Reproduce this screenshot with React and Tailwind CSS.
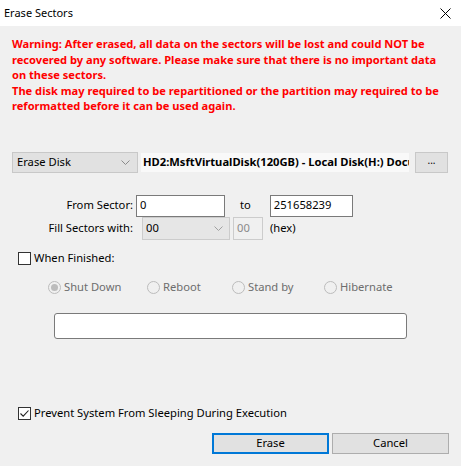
import React from "react";

const Radio = ({ label, checked, className }) => (
  <div className={"flex items-center " + className}>
    <span className="w-[13px] h-[13px] rounded-full border border-[#bcbcbc] bg-[#f0f0f0] flex items-center justify-center">
      {checked && <span className="w-[7px] h-[7px] rounded-full bg-[#bcbcbc]"></span>}
    </span>
    <span className="ml-[3px] text-[#6d6d6d]">{label}</span>
  </div>
);

const Chevron = ({ color = "#8a8a8a" }) => (
  <svg width="9" height="5" viewBox="0 0 9 5" fill="none">
    <path d="M0.5 0.5 L4.5 4.5 L8.5 0.5" stroke={color} strokeWidth="1" />
  </svg>
);

const App = () => {
  return (
    <div
      className="w-[461px] h-[466px] bg-[#f0f0f0] flex flex-col text-[11.2px] text-black overflow-hidden"
      style={{ fontFamily: '"Noto Sans", "Open Sans", sans-serif' }}
    >
      {/* Title bar */}
      <div className="h-[26px] bg-white flex items-center justify-between pl-[4px] pr-[10px] shrink-0">
        <span className="text-[11px]">Erase Sectors</span>
        <svg width="11" height="11" viewBox="0 0 11 11">
          <path d="M0.5 0.5 L10.5 10.5 M10.5 0.5 L0.5 10.5" stroke="#000" strokeWidth="1" />
        </svg>
      </div>

      {/* Warning */}
      <div className="mt-[10px] ml-[12px] text-[#ff0000] font-bold text-[11.1px] leading-[15.5px] whitespace-nowrap">
        Warning: After erased, all data on the sectors will be lost and could NOT be
        <br />
        recovered by any software. Please make sure that there is no important data
        <br />
        on these sectors.
        <br />
        The disk may required to be repartitioned or the partition may required to be
        <br />
        reformatted before it can be used again.
      </div>

      {/* Disk row */}
      <div className="mt-[38px] ml-[12px] flex items-center h-[21px]">
        <div className="w-[126px] h-[21px] bg-[#e1e1e1] border border-[#c8c8c8] flex items-center justify-between pl-[4px] pr-[7px]">
          <span>Erase Disk</span>
          <Chevron />
        </div>
        <div className="ml-[2px] w-[270px] h-[21px] bg-[#f9f9f9] border border-[#f0f0f0] flex items-center pl-[2px] overflow-hidden">
          <span className="block w-[266px] overflow-hidden whitespace-nowrap font-bold">
            HD2:MsftVirtualDisk(120GB) - Local Disk(H:) Documents
          </span>
        </div>
        <div className="ml-[5px] w-[33px] h-[21px] bg-[#e1e1e1] border border-[#c8c8c8] flex items-center justify-center text-[10px] pb-[3px]">
          ...
        </div>
      </div>

      {/* From sector row */}
      <div className="mt-[22px] ml-[12px] flex items-center h-[22px]">
        <span className="w-[121px] text-right">From Sector:</span>
        <div className="ml-[3px] w-[89px] h-[22px] bg-white border border-[#7a7a7a] flex items-center pl-[3px]">
          0
        </div>
        <span className="ml-[15px]">to</span>
        <div className="ml-[19px] w-[83px] h-[22px] bg-white border border-[#7a7a7a] flex items-center pl-[3px]">
          251658239
        </div>
      </div>

      {/* Fill row */}
      <div className="mt-[0px] ml-[12px] flex items-center h-[23px]">
        <span className="w-[121px] text-right">Fill Sectors with:</span>
        <div className="ml-[9px] w-[88px] h-[23px] bg-[#e6e6e6] border border-[#cccccc] flex items-center justify-between pl-[3px] pr-[6px]">
          <span>00</span>
          <Chevron color="#a0a0a0" />
        </div>
        <div className="ml-[3px] w-[30px] h-[23px] bg-[#f0f0f0] border border-[#cccccc] flex items-center pl-[3px] text-[#8a8a8a]">
          00
        </div>
        <span className="ml-[7px]">(hex)</span>
      </div>

      {/* When finished */}
      <div className="mt-[12px] ml-[18px] flex items-center h-[14px]">
        <span className="w-[13px] h-[13px] border border-[#333333] bg-white"></span>
        <span className="ml-[3px]">When Finished:</span>
      </div>

      <div className="mt-[14px] ml-[48px] flex items-center h-[16px]">
        <Radio label="Shut Down" checked className="w-[99px]" />
        <Radio label="Reboot" className="w-[85px]" />
        <Radio label="Stand by" className="w-[92px]" />
        <Radio label="Hibernate" />
      </div>

      <div className="mt-[17px] ml-[54px] w-[353px] h-[26px] shrink-0 bg-white border border-[#7a7a7a] rounded-[3px]"></div>

      {/* Prevent sleeping */}
      <div className="mt-[68px] ml-[18px] flex items-center h-[13px]">
        <span className="w-[13px] h-[13px] border border-[#333333] bg-white flex items-center justify-center">
          <svg width="11" height="11" viewBox="0 0 11 11" fill="none">
            <path d="M1.5 5.5 L4.2 8.2 L9.5 2.5" stroke="#222" strokeWidth="1.1" />
          </svg>
        </span>
        <span className="ml-[3px]">Prevent System From Sleeping During Execution</span>
      </div>

      {/* Buttons */}
      <div className="mt-[13px] ml-[212px] flex items-center">
        <div className="w-[117px] h-[21px] bg-[#e1e1e1] border-2 border-[#0078d7] flex items-center justify-center">
          Erase
        </div>
        <div className="ml-[3px] w-[117px] h-[21px] bg-[#e1e1e1] border border-[#adadad] flex items-center justify-center">
          Cancel
        </div>
      </div>
    </div>
  );
};

export default App;
